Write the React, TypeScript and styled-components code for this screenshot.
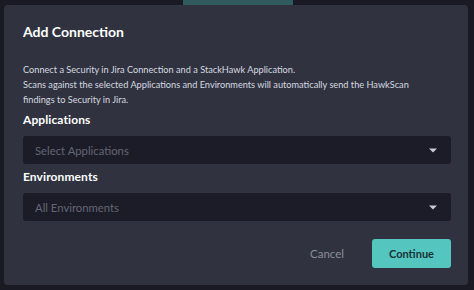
import styled, { createGlobalStyle } from 'styled-components';

const GlobalStyle = createGlobalStyle`
  html, body {
    margin: 0;
    padding: 0;
    background: #1a1a25;
  }
  body {
    font-family: Lato, "Noto Sans", sans-serif;
  }
`

const Caret = () => (
  <svg width="8" height="5" viewBox="0 0 8 5">
    <path d="M0 0.5 H8 L4 4.5 Z" fill="#c9ccd6" />
  </svg>
)

const Select = ({ placeholder }: { placeholder: string }) => (
  <SelectBox>
    <Placeholder>{placeholder}</Placeholder>
    <Caret />
  </SelectBox>
)

export default function App() {
  return (
    <>
      <GlobalStyle />
      <Page>
        <TopTab />
        <Modal>
          <Title>Add Connection</Title>
          <Description>
            Connect a Security in Jira Connection and a StackHawk Application.
            <br />
            Scans against the selected Applications and Environments will automatically send the HawkScan
            <br />
            findings to Security in Jira.
          </Description>

          <Label>Applications</Label>
          <Select placeholder="Select Applications" />

          <Label>Environments</Label>
          <Select placeholder="All Environments" />

          <Footer>
            <CancelButton>Cancel</CancelButton>
            <ContinueButton>Continue</ContinueButton>
          </Footer>
        </Modal>
      </Page>
    </>
  )
}

const Page = styled.div`
  position: relative;
  width: 474px;
  height: 290px;
  box-sizing: border-box;
  padding: 5px 6px 0 4px;
  overflow: hidden;
`

const TopTab = styled.div`
  position: absolute;
  top: 0;
  left: 183px;
  width: 110px;
  height: 5px;
  background: #2f5a5e;
`

const Modal = styled.div`
  position: relative;
  height: 280px;
  box-sizing: border-box;
  background: #30333f;
  border-radius: 4px;
  padding: 17px 17px 0 19px;
  display: flex;
  flex-direction: column;
`

const Title = styled.h1`
  margin: 0;
  font-size: 14px;
  font-weight: 700;
  line-height: 20px;
  color: #ffffff;
`

const Description = styled.p`
  margin: 20px 0 0;
  font-size: 9.2px;
  line-height: 15px;
  color: #d6d9e0;
  white-space: nowrap;
`

const Label = styled.div`
  margin-top: 4px;
  font-size: 12px;
  font-weight: 700;
  line-height: 18px;
  color: #ffffff;
  letter-spacing: 0.1px;
`

const SelectBox = styled.div`
  margin-top: 7px;
  height: 28px;
  background: #1c1c28;
  border-radius: 3px;
  display: flex;
  align-items: center;
  justify-content: space-between;
  padding: 0 14px 0 12px;
`

const Placeholder = styled.span`
  font-size: 11.3px;
  color: #626674;
`

const Footer = styled.div`
  margin-top: 18px;
  display: flex;
  justify-content: flex-end;
  align-items: center;
  gap: 28px;
`

const CancelButton = styled.button`
  background: none;
  border: none;
  padding: 0;
  font-family: Lato, sans-serif;
  font-size: 11.5px;
  color: #8a8e99;
`

const ContinueButton = styled.button`
  width: 79px;
  height: 29px;
  border: none;
  border-radius: 3px;
  background: #54c6bf;
  color: #173238;
  font-family: Lato, sans-serif;
  font-size: 11px;
  font-weight: 700;
`
